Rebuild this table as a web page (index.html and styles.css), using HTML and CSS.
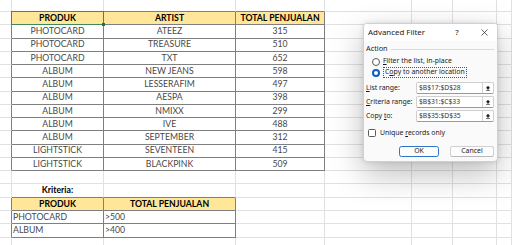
FILE: index.html
```html
<!DOCTYPE html>
<html>
<head>
<meta charset="utf-8">
<link rel="stylesheet" href="styles.css">
</head>
<body>
<div class="page">
  <div class="sheet">
    <div class="c"></div><div class="c u"></div><div class="c u"></div><div class="c u"></div><div class="c"></div><div class="c"></div><div class="c"></div><div class="c"></div>

    <div class="c l"></div><div class="c t h sel">PRODUK</div><div class="c t h">ARTIST</div><div class="c t h">TOTAL PENJUALAN</div><div class="c"></div><div class="c"></div><div class="c"></div><div class="c"></div>
    <div class="c l"></div><div class="c t">PHOTOCARD</div><div class="c t">ATEEZ</div><div class="c t">315</div><div class="c"></div><div class="c"></div><div class="c"></div><div class="c"></div>
    <div class="c l"></div><div class="c t">PHOTOCARD</div><div class="c t">TREASURE</div><div class="c t">510</div><div class="c"></div><div class="c"></div><div class="c"></div><div class="c"></div>
    <div class="c l"></div><div class="c t">PHOTOCARD</div><div class="c t">TXT</div><div class="c t">652</div><div class="c"></div><div class="c"></div><div class="c"></div><div class="c"></div>
    <div class="c l"></div><div class="c t">ALBUM</div><div class="c t">NEW JEANS</div><div class="c t">598</div><div class="c"></div><div class="c"></div><div class="c"></div><div class="c"></div>
    <div class="c l"></div><div class="c t">ALBUM</div><div class="c t">LESSERAFIM</div><div class="c t">497</div><div class="c"></div><div class="c"></div><div class="c"></div><div class="c"></div>
    <div class="c l"></div><div class="c t">ALBUM</div><div class="c t">AESPA</div><div class="c t">398</div><div class="c"></div><div class="c"></div><div class="c"></div><div class="c"></div>
    <div class="c l"></div><div class="c t">ALBUM</div><div class="c t">NMIXX</div><div class="c t">299</div><div class="c"></div><div class="c"></div><div class="c"></div><div class="c"></div>
    <div class="c l"></div><div class="c t">ALBUM</div><div class="c t">IVE</div><div class="c t">488</div><div class="c"></div><div class="c"></div><div class="c"></div><div class="c"></div>
    <div class="c l"></div><div class="c t">ALBUM</div><div class="c t">SEPTEMBER</div><div class="c t">312</div><div class="c"></div><div class="c"></div><div class="c"></div><div class="c"></div>
    <div class="c l"></div><div class="c t">LIGHTSTICK</div><div class="c t">SEVENTEEN</div><div class="c t">415</div><div class="c"></div><div class="c"></div><div class="c"></div><div class="c"></div>
    <div class="c l"></div><div class="c t">LIGHTSTICK</div><div class="c t">BLACKPINK</div><div class="c t">509</div><div class="c"></div><div class="c"></div><div class="c"></div><div class="c"></div>

    <div class="c"></div><div class="c"></div><div class="c"></div><div class="c"></div><div class="c"></div><div class="c"></div><div class="c"></div><div class="c"></div>
    <div class="c"></div><div class="c u b">Kriteria:</div><div class="c u"></div><div class="c"></div><div class="c"></div><div class="c"></div><div class="c"></div><div class="c"></div>

    <div class="c l"></div><div class="c t h">PRODUK</div><div class="c t h">TOTAL PENJUALAN</div><div class="c"></div><div class="c"></div><div class="c"></div><div class="c"></div><div class="c"></div>
    <div class="c l"></div><div class="c t left">PHOTOCARD</div><div class="c t left">&gt;500</div><div class="c"></div><div class="c"></div><div class="c"></div><div class="c"></div><div class="c"></div>
    <div class="c l"></div><div class="c t left">ALBUM</div><div class="c t left">&gt;400</div><div class="c"></div><div class="c"></div><div class="c"></div><div class="c"></div><div class="c"></div>

    <div class="c"></div><div class="c"></div><div class="c"></div><div class="c"></div><div class="c"></div><div class="c"></div><div class="c"></div><div class="c"></div>
  </div>

  <div class="dialog">
    <div class="dlg-title">
      <span class="dlg-name">Advanced Filter</span>
      <span class="dlg-help">?</span>
      <svg class="dlg-close" viewBox="0 0 8 8" width="7" height="7"><path d="M0.5 0.5 L7.5 7.5 M7.5 0.5 L0.5 7.5" stroke="#222" stroke-width="0.8" fill="none"/></svg>
    </div>
    <div class="dlg-body">
      <div class="group"><span>Action</span><span class="group-line"></span></div>
      <div class="radio-row"><span class="radio"></span><span><u>F</u>ilter the list, in-place</span></div>
      <div class="radio-row"><span class="radio on"></span><span class="focus">C<u>o</u>py to another location</span></div>
      <div class="field">
        <span class="flabel"><u>L</u>ist range:</span>
        <span class="input"><span class="val">$B$17:$D$28</span><span class="ref"><svg viewBox="0 0 8 8" width="6" height="6"><path d="M4 1 L7 4.2 H5.2 V6 H2.8 V4.2 H1 Z" fill="#222"/><path d="M1.5 7.4 H6.5" stroke="#222" stroke-width="0.9"/></svg></span></span>
      </div>
      <div class="field">
        <span class="flabel"><u>C</u>riteria range:</span>
        <span class="input"><span class="val">$B$31:$C$33</span><span class="ref"><svg viewBox="0 0 8 8" width="6" height="6"><path d="M4 1 L7 4.2 H5.2 V6 H2.8 V4.2 H1 Z" fill="#222"/><path d="M1.5 7.4 H6.5" stroke="#222" stroke-width="0.9"/></svg></span></span>
      </div>
      <div class="field">
        <span class="flabel">Copy <u>t</u>o:</span>
        <span class="input"><span class="val">$B$35:$D$35</span><span class="ref"><svg viewBox="0 0 8 8" width="6" height="6"><path d="M4 1 L7 4.2 H5.2 V6 H2.8 V4.2 H1 Z" fill="#222"/><path d="M1.5 7.4 H6.5" stroke="#222" stroke-width="0.9"/></svg></span></span>
      </div>
      <div class="check-row"><span class="check"></span><span>Unique <u>r</u>ecords only</span></div>
      <div class="buttons"><span class="btn ok">OK</span><span class="btn cancel">Cancel</span></div>
    </div>
  </div>
</div>
</body>
</html>
```

FILE: styles.css
```css
* { box-sizing: border-box; margin: 0; padding: 0; }
html, body { width: 512px; height: 245px; overflow: hidden; background: #fff; }
body { font-family: "Lato", "Liberation Sans", sans-serif; }

.page { position: relative; width: 512px; height: 245px; overflow: hidden; }

.sheet {
  display: grid;
  grid-template-columns: 12px 92px 132px 89px 87px 41px 44px 15px;
  grid-template-rows: 12px repeat(18, 13.28px);
}

.c {
  border-right: 1px solid #e1e1e1;
  border-bottom: 1px solid #e1e1e1;
  display: flex;
  align-items: center;
  justify-content: center;
  font-size: 8.7px;
  line-height: 1;
  color: #484848;
  white-space: nowrap;
}
.t { border-right-color: #7f7f7f; border-bottom-color: #7f7f7f; }
.l { border-right-color: #7f7f7f; }
.u { border-bottom-color: #7f7f7f; }
.h { background: #ffe699; font-weight: 700; color: #000; }
.b { font-weight: 700; color: #000; }
.left { justify-content: flex-start; padding-left: 1px; }

.sel { position: relative; }
.sel::before {
  content: "";
  position: absolute;
  left: -1px; top: -1px; right: -1px; bottom: -1px;
  border: 1px solid #3f8a5a;
}
.sel::after {
  content: "";
  position: absolute;
  right: -2px; bottom: -2px;
  width: 3px; height: 3px;
  background: #217346;
}

/* dialog */
.dialog {
  position: absolute;
  left: 363px; top: 23px;
  width: 135px; height: 139px;
  background: #fafafa;
  border: 1px solid #d0d0d0;
  border-radius: 4px;
  box-shadow: 0 12px 32px rgba(0,0,0,0.26), 0 0 5px rgba(0,0,0,0.12);
  font-family: "Noto Sans", "Open Sans", sans-serif;
  font-size: 6.9px;
  line-height: 1;
  color: #1b1b1b;
  display: flex;
  flex-direction: column;
  overflow: hidden;
}
.dlg-title {
  height: 17px;
  background: #fff;
  display: flex;
  align-items: center;
  padding-left: 4px;
  font-size: 7.9px;
}
.dlg-name { flex: 1; }
.dlg-help { width: 6px; text-align: center; margin-right: 21px; }
.dlg-close { display: block; margin-right: 9px; }

.dlg-body {
  display: flex;
  flex-direction: column;
  padding: 0 3px 0 2px;
}
.group {
  display: flex;
  align-items: center;
  gap: 3px;
  height: 10px;
  margin-top: 3px;
  font-size: 7.3px;
}
.group-line { flex: 1; height: 1px; background: #dadada; }

.radio-row {
  display: flex;
  align-items: center;
  gap: 3px;
  height: 11px;
  padding-left: 6px;
}
.radio {
  width: 8px; height: 8px;
  border-radius: 50%;
  border: 1px solid #5a5a5a;
  background: #fff;
  flex: none;
}
.radio.on {
  border: 2.5px solid #0a5fb8;
  background: #fff;
}
.focus {
  border: 1px dotted #555;
  padding: 1px 1px;
}

.field {
  display: flex;
  align-items: center;
  height: 12px;
  margin-top: 2px;
}
.group + .radio-row { margin-top: 2px; }
.radio-row + .field { margin-top: 4px; }
.flabel { width: 50px; flex: none; }
.input {
  flex: 1;
  height: 12px;
  display: flex;
  align-items: stretch;
  background: #fff;
  border: 1px solid #cfcfcf;
  border-bottom-color: #9a9a9a;
  border-radius: 2px;
  color: #333;
}
.val { flex: 1; display: flex; align-items: center; padding-left: 2px; font-size: 6.7px; }
.ref {
  width: 11px;
  flex: none;
  display: flex;
  align-items: center;
  justify-content: center;
  border-left: 1px solid #d4d4d4;
}
.ref svg { display: block; }

.check-row {
  display: flex;
  align-items: center;
  gap: 4px;
  height: 10px;
  margin-top: 6px;
  padding-left: 2px;
}
.check {
  width: 8px; height: 8px;
  border: 1px solid #5a5a5a;
  border-radius: 1.5px;
  background: #fff;
  flex: none;
}

.buttons {
  display: flex;
  justify-content: flex-end;
  gap: 11px;
  margin-top: 8px;
}
.btn {
  height: 11px;
  display: flex;
  align-items: center;
  justify-content: center;
  border: 1px solid #d0d0d0;
  border-bottom-color: #b8b8b8;
  border-radius: 2.5px;
  background: #fdfdfd;
}
.ok { width: 40px; border-color: #2f74c7; }
.cancel { width: 44px; }
```
